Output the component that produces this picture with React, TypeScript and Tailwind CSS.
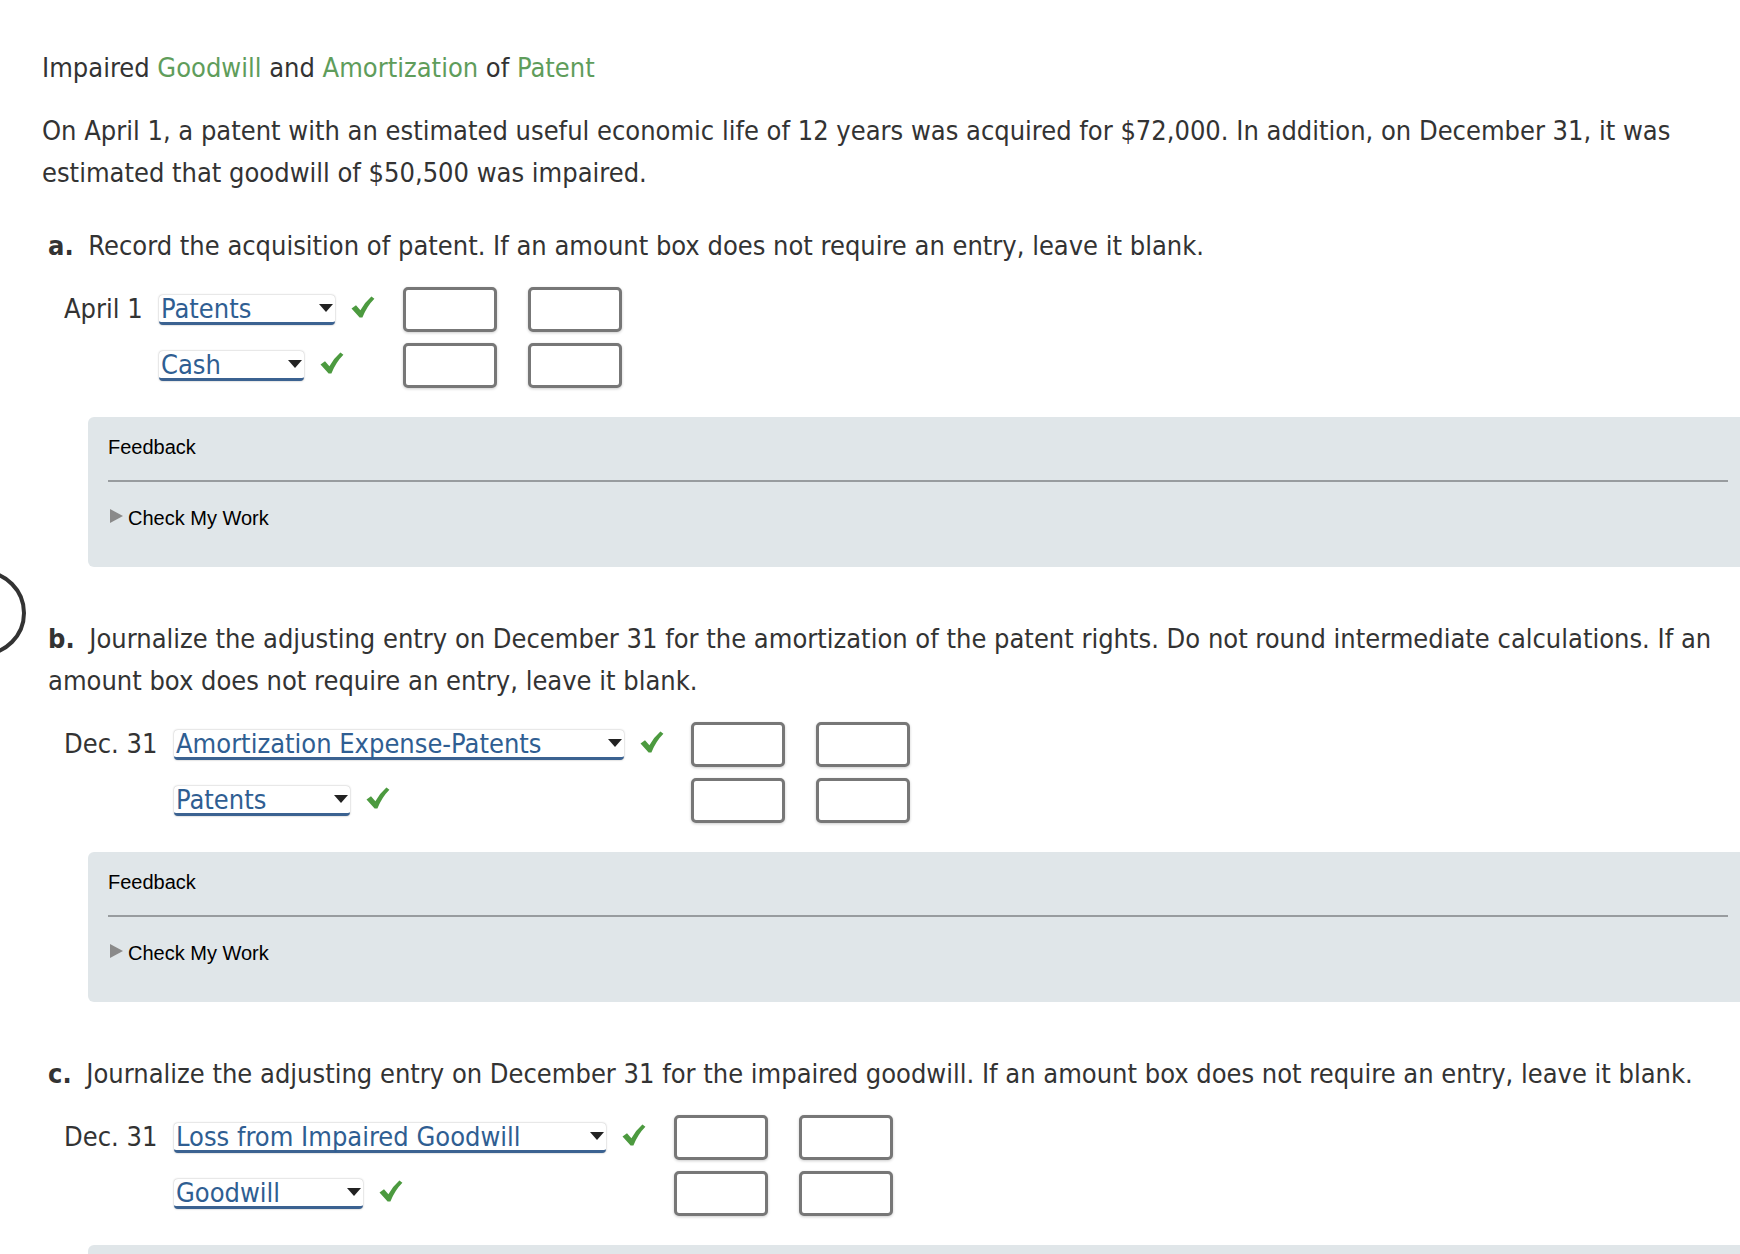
import React from 'react';

const MAIN_FONT = { fontFamily: '"DejaVu Sans Condensed", "DejaVu Sans", Verdana, sans-serif' };
const FEEDBACK_FONT = { fontFamily: '"Liberation Sans", Arial, sans-serif' };

const Check = () => (
  <svg width="24" height="23" viewBox="0 0 24 23" className="shrink-0 -translate-y-[2px]">
    <path d="M0.5 12.5 L5 9.2 L9.4 14.2 Q14 6.2 20.4 0.6 L23.4 2.8 Q15.8 10.4 11.4 21.6 L8.6 21.6 Z" fill="#4c9a3f" />
  </svg>
);

const Select = ({ label, width }: { label: string; width: string }) => (
  <div
    className={`flex h-[30px] items-center justify-between rounded-[4px] border-b-[3px] border-[#3b6291] bg-white pl-[2px] pr-[2px] shadow-[0_0_2px_rgba(0,0,0,0.35)] ${width}`}
  >
    <span className="text-[#2f5e92] leading-none">{label}</span>
    <svg width="14" height="8" viewBox="0 0 14 8">
      <path d="M0 0 H14 L7 8 Z" fill="#222" />
    </svg>
  </div>
);

const AmountBox = () => (
  <div className="h-[45px] w-[94px] rounded-[5px] border-[3px] border-[#777] bg-white shadow-[0_1px_3px_rgba(0,0,0,0.2)]" />
);

interface Line {
  date?: string;
  account: string;
  width: string;
}

const JournalGrid = ({
  lines,
  dateWidth,
  accountCol,
}: {
  lines: Line[];
  dateWidth: string;
  accountCol: string;
}) => (
  <div className="mt-[20px] flex flex-col gap-[11px] pl-[16px]">
    {lines.map((l, i) => (
      <div key={i} className="flex items-center">
        <div className={`${dateWidth} shrink-0`}>{l.date ?? ''}</div>
        <div className={`flex items-center ${accountCol} shrink-0`}>
          <Select label={l.account} width={l.width} />
          <div className="ml-[16px]">
            <Check />
          </div>
        </div>
        <AmountBox />
        <div className="ml-[31px]">
          <AmountBox />
        </div>
      </div>
    ))}
  </div>
);

const Feedback = () => (
  <div
    className="mr-[-8px] ml-[46px] mt-[29px] rounded-l-[6px] bg-[#e0e6e9] px-[20px] pt-[18px] pb-[37px] text-[20px] leading-[24px] text-black"
    style={FEEDBACK_FONT}
  >
    <div>Feedback</div>
    <div className="mt-[21px] h-[2px] bg-[#989c9f]" />
    <div className="mt-[24px] flex items-center">
      <svg width="14" height="14" viewBox="0 0 14 14" className="ml-[2px] mr-[4px] -translate-y-[2px]">
        <path d="M0 0 L13 7 L0 14 Z" fill="#8a8a8a" />
      </svg>
      <span>Check My Work</span>
    </div>
  </div>
);

const Label = ({ children }: { children: React.ReactNode }) => (
  <b className="mr-[7px] text-[#333]">{children}</b>
);

export default function App() {
  return (
    <div className="relative h-[1254px] overflow-hidden bg-white text-[#333] text-[27px]" style={MAIN_FONT}>
      <svg width="30" height="92" viewBox="0 0 30 92" className="absolute left-0 top-[567px]">
        <circle cx="-17" cy="46" r="41" fill="none" stroke="#333" strokeWidth="4" />
      </svg>

      <div className="pl-[42px] pt-[47px]">
        <h1 className="leading-[42px]">
          Impaired <span className="text-[#5f9d5b]">Goodwill</span> and{' '}
          <span className="text-[#5f9d5b]">Amortization</span> of{' '}
          <span className="text-[#5f9d5b]">Patent</span>
        </h1>
        <p className="mt-[21px] leading-[42px]">
          On April 1, a patent with an estimated useful economic life of 12 years was acquired for $72,000. In
          addition, on December 31, it was estimated that goodwill of $50,500 was impaired.
        </p>

        {/* a */}
        <div className="mt-[31px] pl-[6px]">
          <p className="leading-[42px]">
            <Label>a.</Label> Record the acquisition of patent. If an amount box does not require an entry, leave it
            blank.
          </p>
          <JournalGrid
            dateWidth="w-[95px]"
            accountCol="w-[244px]"
            lines={[
              { date: 'April 1', account: 'Patents', width: 'w-[176px]' },
              { account: 'Cash', width: 'w-[145px]' },
            ]}
          />
        </div>
        <Feedback />

        {/* b */}
        <div className="mt-[51px] pl-[6px]">
          <p className="leading-[42px]">
            <Label>b.</Label> Journalize the adjusting entry on December 31 for the amortization of the patent rights.
            Do not round intermediate calculations. If an amount box does not require an entry, leave it blank.
          </p>
          <JournalGrid
            dateWidth="w-[110px]"
            accountCol="w-[517px]"
            lines={[
              { date: 'Dec. 31', account: 'Amortization Expense-Patents', width: 'w-[450px]' },
              { account: 'Patents', width: 'w-[176px]' },
            ]}
          />
        </div>
        <Feedback />

        {/* c */}
        <div className="mt-[51px] pl-[6px]">
          <p className="leading-[42px]">
            <Label>c.</Label> Journalize the adjusting entry on December 31 for the impaired goodwill. If an amount box
            does not require an entry, leave it blank.
          </p>
          <JournalGrid
            dateWidth="w-[110px]"
            accountCol="w-[500px]"
            lines={[
              { date: 'Dec. 31', account: 'Loss from Impaired Goodwill', width: 'w-[432px]' },
              { account: 'Goodwill', width: 'w-[189px]' },
            ]}
          />
        </div>
        <div className="mr-[-8px] ml-[46px] mt-[29px] h-[150px] rounded-l-[6px] bg-[#e0e6e9]" />
      </div>
    </div>
  );
}
